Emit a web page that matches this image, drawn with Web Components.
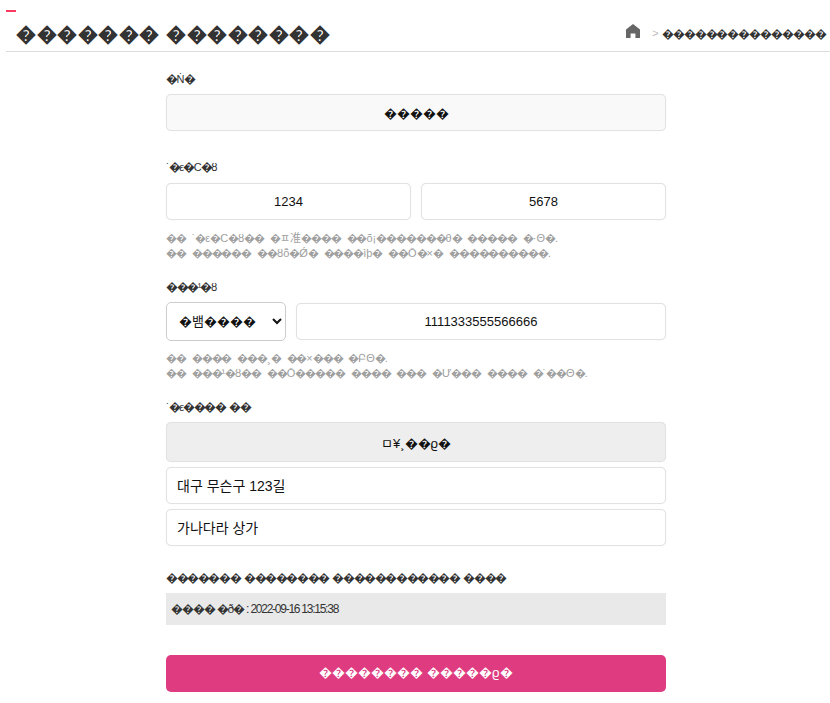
<!DOCTYPE html>
<html lang="ko"><head><meta charset="utf-8"><title>form</title>
<style>
html,body{margin:0;padding:0;background:#fff}
body{font-family:"Liberation Sans","Noto Sans CJK KR",sans-serif;color:#333;width:830px;height:703px;overflow:hidden}
</style></head><body>
<page-head title-text="������� ��������" crumb="���������������"></page-head>
<form-col>
  <f-label style="margin-top:20px">�Ṅ�</f-label>
  <f-box variant="ro" style="margin-top:7px">�����</f-box>
  <f-label style="margin-top:29px">˙�ε�C�ȣ</f-label>
  <f-row style="margin-top:8px"><f-box>1234</f-box><f-box>5678</f-box></f-row>
  <f-note style="margin-top:11px">�� ˙�ε�C�ȣ�� �ㅍ准���� ��õ¡�������θ� ����� �·Θ�.<br>�� ������ ��ȣȭ�Ǿ� ����ìþ� ��Ō�×� ����������.</f-note>
  <f-label style="margin-top:19px">���¹�ȣ</f-label>
  <f-row style="margin-top:7px;align-items:center"><f-select>�뱀����</f-select><f-box>1111333555566666</f-box></f-row>
  <f-note style="margin-top:10px">�� ���� ���¸� ��×��� �ԲΘ�.<br>�� ���¹�ȣ�� ��Ō����� ���� ��� �Ư��� ���� �˙��Θ�.</f-note>
  <f-label style="margin-top:19px">˙�ε���� ��</f-label>
  <f-box variant="btn" style="margin-top:7px">ㅁ¥¸��ϱ�</f-box>
  <f-box align="left" style="margin-top:5px">대구 무슨구 123길</f-box>
  <f-box align="left" style="margin-top:5px">가나다라 상가</f-box>
  <f-label style="margin-top:25px">������� �������� ������������ ����</f-label>
  <f-stamp style="margin-top:7px">���� �ð� : <span style="letter-spacing:-1.25px">2022-09-16 13:15:38</span></f-stamp>
  <f-submit style="margin-top:30px">�������� �����ϱ�</f-submit>
</form-col>
<script>
function def(name, css, html){
  customElements.define(name, class extends HTMLElement{
    connectedCallback(){
      const r=this.shadowRoot||this.attachShadow({mode:'open'});
      r.innerHTML='<style>'+css+'</style>'+(typeof html==='function'?html(this):html);}
  });
}
const FF='"Liberation Sans","Noto Sans CJK KR",sans-serif';
/* Wraps every run of characters other than U+FFFD so it can be spaced apart from the diamonds. */
const narrow=el=>el.innerHTML.split(/<br\s*\/?>/).map(l=>l.replace(/[^\uFFFD\s]+/g,m=>`<span class="n">${m}</span>`)).join('<br>');
customElements.define('page-head', class extends HTMLElement{
  connectedCallback(){
    const r=this.shadowRoot||this.attachShadow({mode:'open'});
    r.innerHTML=`<style>
    :host{display:block;margin:10px 0 0 6px;border-bottom:1px solid #ddd;height:41px;position:relative}
    .mark{position:absolute;left:0;top:0;width:10px;height:2px;background:#fb3a62}
    .bar{display:flex;align-items:center;justify-content:space-between;height:100%;padding:5px 4px 0 10px;box-sizing:border-box}
    h1{margin:0;font:bold 20px ${FF};color:#333;letter-spacing:.55px;white-space:nowrap}
    nav{display:flex;align-items:center;font-size:12px;white-space:nowrap;color:#333}
    nav span{letter-spacing:-1.05px}
    svg{width:16px;height:16px;display:block;margin-right:11px;margin-top:-5px}
    i{font-style:normal;color:#bbb;margin-right:3px;font-size:11px}
    </style><div class="mark"></div><div class="bar"><h1>${this.getAttribute('title-text')}</h1>
    <nav><svg viewBox="0 0 16 16"><path fill="#666" d="M8 1 1 6.6V15h4.6v-4.6h4.8V15H15V6.6z"/></svg><i>&gt;</i><span>${this.getAttribute('crumb')}</span></nav></div>`;
  }
});
def('form-col',':host{display:block;width:500px;margin-left:166px}','<slot></slot>');
def('f-label',`:host{display:block;font:12px/15px ${FF};color:#333;letter-spacing:-1.4px;word-spacing:1.8px;white-space:nowrap}.n{font-size:11px;letter-spacing:-1px}`,narrow);
def('f-box',`:host{display:flex;flex:1 1 0;min-width:0;align-items:center;justify-content:center;box-sizing:border-box;height:37px;border:1px solid #e2e2e2;border-radius:5px;background:#fff;font:13px ${FF};color:#111;white-space:nowrap;box-shadow:0 0 1px #e8e8e8}
:host([variant=ro]){background:#f9f9f9}:host([variant=btn]){background:#eee;height:40px}:host([align=left]){justify-content:flex-start;padding:0 0 1px 10px;font-size:14px}`,'<slot></slot>');
def('f-row',':host{display:flex;gap:10px}','<slot></slot>');
def('f-select',`:host{display:flex;flex:0 0 120px}select{width:120px;height:39px;box-sizing:border-box;border:1px solid #ccc;border-radius:5px;background:#fff;font:13px ${FF};color:#111;text-align:center;padding:0 5px 0 0}`,
 el=>`<select><option>${el.textContent}</option></select>`);
def('f-note',`:host{display:block;font:11px/15px ${FF};color:#a0a0a0;white-space:nowrap;letter-spacing:-1.1px;word-spacing:4px}.n{letter-spacing:0}`,narrow);
def('f-stamp',`:host{display:block;height:32px;box-sizing:border-box;padding-left:5px;background:#e9e9e9;font:12px/33px ${FF};color:#333;letter-spacing:-1.15px;white-space:nowrap}`,'<slot></slot>');
def('f-submit',`:host{display:block;height:37px;border-radius:5px;background:#de3b80;color:#fff;font:13px/36px ${FF};text-align:center;white-space:nowrap}`,'<slot></slot>');
</script>
</body></html>
